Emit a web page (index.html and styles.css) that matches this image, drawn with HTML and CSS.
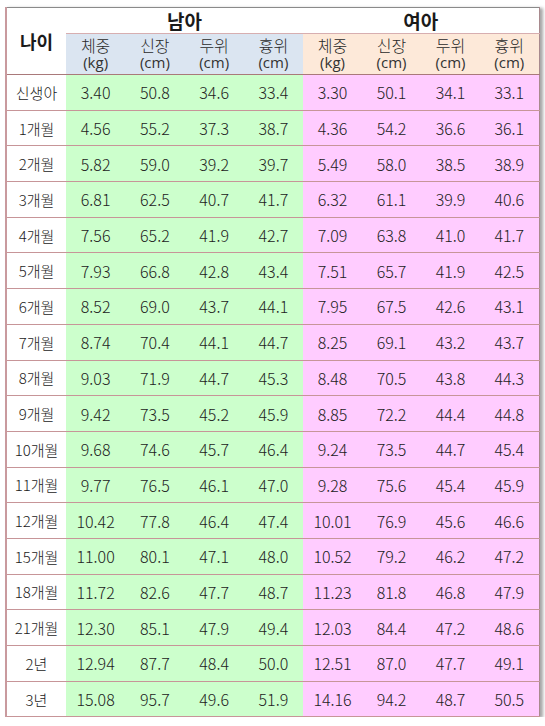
FILE: index.html
```html
<!DOCTYPE html>
<html lang="ko">
<head>
<meta charset="utf-8">
<title>영유아 성장 기준표</title>
<link rel="stylesheet" href="styles.css">
</head>
<body>
<div class="sheet">
<table class="growth">
<colgroup>
<col class="c-age">
<col class="c-m"><col class="c-m"><col class="c-m"><col class="c-m">
<col class="c-f"><col class="c-f"><col class="c-f"><col class="c-f">
</colgroup>
<thead>
<tr class="h1">
<th rowspan="2" class="age-h">나이</th>
<th colspan="4" class="sex">남아</th>
<th colspan="4" class="sex">여아</th>
</tr>
<tr class="h2">
<th class="hm"><span class="ko">체중</span><span class="unit">(kg)</span></th>
<th class="hm"><span class="ko">신장</span><span class="unit">(cm)</span></th>
<th class="hm"><span class="ko">두위</span><span class="unit">(cm)</span></th>
<th class="hm"><span class="ko">흉위</span><span class="unit">(cm)</span></th>
<th class="hf"><span class="ko">체중</span><span class="unit">(kg)</span></th>
<th class="hf"><span class="ko">신장</span><span class="unit">(cm)</span></th>
<th class="hf"><span class="ko">두위</span><span class="unit">(cm)</span></th>
<th class="hf"><span class="ko">흉위</span><span class="unit">(cm)</span></th>
</tr>
</thead>
<tbody>
<tr><th>신생아</th><td class="m">3.40</td><td class="m">50.8</td><td class="m">34.6</td><td class="m">33.4</td><td class="f">3.30</td><td class="f">50.1</td><td class="f">34.1</td><td class="f">33.1</td></tr>
<tr><th>1개월</th><td class="m">4.56</td><td class="m">55.2</td><td class="m">37.3</td><td class="m">38.7</td><td class="f">4.36</td><td class="f">54.2</td><td class="f">36.6</td><td class="f">36.1</td></tr>
<tr><th>2개월</th><td class="m">5.82</td><td class="m">59.0</td><td class="m">39.2</td><td class="m">39.7</td><td class="f">5.49</td><td class="f">58.0</td><td class="f">38.5</td><td class="f">38.9</td></tr>
<tr><th>3개월</th><td class="m">6.81</td><td class="m">62.5</td><td class="m">40.7</td><td class="m">41.7</td><td class="f">6.32</td><td class="f">61.1</td><td class="f">39.9</td><td class="f">40.6</td></tr>
<tr><th>4개월</th><td class="m">7.56</td><td class="m">65.2</td><td class="m">41.9</td><td class="m">42.7</td><td class="f">7.09</td><td class="f">63.8</td><td class="f">41.0</td><td class="f">41.7</td></tr>
<tr><th>5개월</th><td class="m">7.93</td><td class="m">66.8</td><td class="m">42.8</td><td class="m">43.4</td><td class="f">7.51</td><td class="f">65.7</td><td class="f">41.9</td><td class="f">42.5</td></tr>
<tr><th>6개월</th><td class="m">8.52</td><td class="m">69.0</td><td class="m">43.7</td><td class="m">44.1</td><td class="f">7.95</td><td class="f">67.5</td><td class="f">42.6</td><td class="f">43.1</td></tr>
<tr><th>7개월</th><td class="m">8.74</td><td class="m">70.4</td><td class="m">44.1</td><td class="m">44.7</td><td class="f">8.25</td><td class="f">69.1</td><td class="f">43.2</td><td class="f">43.7</td></tr>
<tr><th>8개월</th><td class="m">9.03</td><td class="m">71.9</td><td class="m">44.7</td><td class="m">45.3</td><td class="f">8.48</td><td class="f">70.5</td><td class="f">43.8</td><td class="f">44.3</td></tr>
<tr><th>9개월</th><td class="m">9.42</td><td class="m">73.5</td><td class="m">45.2</td><td class="m">45.9</td><td class="f">8.85</td><td class="f">72.2</td><td class="f">44.4</td><td class="f">44.8</td></tr>
<tr><th>10개월</th><td class="m">9.68</td><td class="m">74.6</td><td class="m">45.7</td><td class="m">46.4</td><td class="f">9.24</td><td class="f">73.5</td><td class="f">44.7</td><td class="f">45.4</td></tr>
<tr><th>11개월</th><td class="m">9.77</td><td class="m">76.5</td><td class="m">46.1</td><td class="m">47.0</td><td class="f">9.28</td><td class="f">75.6</td><td class="f">45.4</td><td class="f">45.9</td></tr>
<tr><th>12개월</th><td class="m">10.42</td><td class="m">77.8</td><td class="m">46.4</td><td class="m">47.4</td><td class="f">10.01</td><td class="f">76.9</td><td class="f">45.6</td><td class="f">46.6</td></tr>
<tr><th>15개월</th><td class="m">11.00</td><td class="m">80.1</td><td class="m">47.1</td><td class="m">48.0</td><td class="f">10.52</td><td class="f">79.2</td><td class="f">46.2</td><td class="f">47.2</td></tr>
<tr><th>18개월</th><td class="m">11.72</td><td class="m">82.6</td><td class="m">47.7</td><td class="m">48.7</td><td class="f">11.23</td><td class="f">81.8</td><td class="f">46.8</td><td class="f">47.9</td></tr>
<tr><th>21개월</th><td class="m">12.30</td><td class="m">85.1</td><td class="m">47.9</td><td class="m">49.4</td><td class="f">12.03</td><td class="f">84.4</td><td class="f">47.2</td><td class="f">48.6</td></tr>
<tr><th>2년</th><td class="m">12.94</td><td class="m">87.7</td><td class="m">48.4</td><td class="m">50.0</td><td class="f">12.51</td><td class="f">87.0</td><td class="f">47.7</td><td class="f">49.1</td></tr>
<tr><th>3년</th><td class="m">15.08</td><td class="m">95.7</td><td class="m">49.6</td><td class="m">51.9</td><td class="f">14.16</td><td class="f">94.2</td><td class="f">48.7</td><td class="f">50.5</td></tr>
</tbody>
</table>
</div>
</body>
</html>
```

FILE: styles.css
```css
html, body {
  margin: 0;
  padding: 0;
  background: #ffffff;
}

body {
  font-family: "Noto Sans CJK KR", "Noto Sans", sans-serif;
  color: #1a1a1a;
}

.sheet {
  padding: 7px 0 0 5px;
}

.growth {
  width: 533px;
  table-layout: fixed;
  border-collapse: collapse;
  border-top: 1px solid #8a8a8a;
  border-left: 2px solid #c99a9e;
  border-right: 1px solid #a88a8e;
  border-bottom: 1px solid #b98a8e;
  box-shadow: 3px 1px 3px rgba(0, 0, 0, 0.35);
}

.c-age { width: 60px; }
.c-m { width: 59.25px; }
.c-f { width: 59px; }

.growth th,
.growth td {
  padding: 0;
  text-align: center;
  vertical-align: middle;
}

.h1 { height: 26px; }
.h2 { height: 41px; }

.age-h {
  background: #ffffff;
  font-size: 18px;
  font-weight: 700;
  border-bottom: 1px solid #a9797a;
}

.sex {
  background: #ffffff;
  font-size: 19px;
  font-weight: 700;
  line-height: 22px;
  border-bottom: 1px solid #d7aeb0;
}

.hm,
.hf {
  font-weight: 300;
  color: #2a2a2a;
  border-bottom: 1px solid #a9797a;
}

.ko,
.unit {
  display: block;
  height: 17px;
  line-height: 17px;
}

.ko {
  font-size: 16px;
}

.unit {
  font-family: "Open Sans", "Noto Sans", sans-serif;
  font-size: 15px;
  font-weight: 400;
  color: #333333;
}

.hm { background: #dbe5f1; }
.hf { background: #fde9d9; }

.growth tbody tr {
  height: 35.7px;
}

.growth tbody th {
  background: #ffffff;
  font-size: 15px;
  font-weight: 300;
  color: #1a1a1a;
  border-bottom: 1px solid #c79598;
}

.growth tbody td {
  font-size: 16px;
  font-weight: 300;
  color: #222222;
  border-bottom: 1px solid #c79598;
}

.growth td.m { background: #ccffcc; }
.growth td.f { background: #ffccff; }
```
